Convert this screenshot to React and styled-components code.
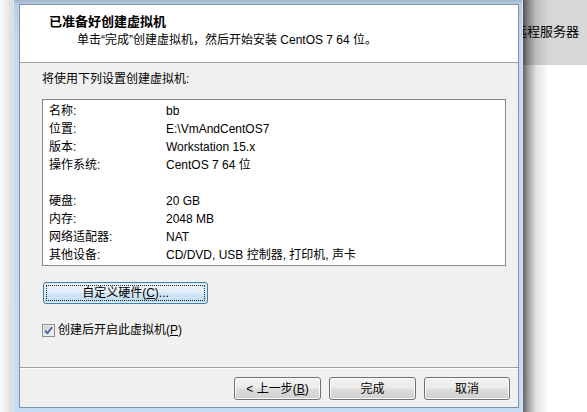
import React from "react";
import styled, { createGlobalStyle } from "styled-components";

const Global = createGlobalStyle`
  html, body { margin: 0; padding: 0; }
  body {
    width: 587px; height: 412px; overflow: hidden;
    font-family: "Liberation Sans", "Noto Sans CJK SC", sans-serif;
    font-size: 12px; color: #000;
  }
`;

const Desktop = styled.div`
  display: grid;
  grid-template-columns: 13px 510px 1fr;
  width: 587px;
  height: 412px;
  background: #ffffff;
`;

const LeftShade = styled.div`
  background: linear-gradient(to right, #fbfbfb 0px, #f0f0f0 5px, #e2e2e2 10px, #d4d8dd 13px);
`;

const Frame = styled.div`
  display: flex;
  padding: 4px 4px 4px 6px;
  background: linear-gradient(to bottom, #9fb3c8 0px, #b7cde4 4px, #c3d9f1 40px, #c6dcf4 100%);
  box-shadow: inset 1px 0 0 #d9e8f8, inset -1px 0 0 #d9e8f8;
`;

const Content = styled.div`
  flex: 1;
  display: flex;
  flex-direction: column;
  border: 1px solid #7f93a9;
  background: #f0f0f0;
  min-width: 0;
`;

const Header = styled.div`
  height: 58px;
  flex: none;
  box-sizing: border-box;
  background: #ffffff;
  border-bottom: 1px solid #a0a0a0;
  padding: 8px 0 0 29px;
`;

const Title = styled.div`
  font-size: 13px;
  font-weight: bold;
  line-height: 18px;
`;

const Subtitle = styled.div`
  margin: 1px 0 0 28px;
  line-height: 16px;
`;

const Body = styled.div`
  flex: 1;
  display: flex;
  flex-direction: column;
  align-items: flex-start;
  padding: 8px 12px 0 22px;
`;

const Intro = styled.div`
  line-height: 16px;
  margin-bottom: 12px;
`;

const List = styled.div`
  align-self: stretch;
  background: #ffffff;
  border: 1px solid #828790;
  padding: 2px 0 1px 6px;
`;

const Row = styled.div`
  display: grid;
  grid-template-columns: 117px 1fr;
  height: 18px;
  line-height: 18px;
  white-space: nowrap;
`;

const PushButton = styled.button`
  position: relative;
  box-sizing: border-box;
  width: ${(p) => p.$w}px;
  height: ${(p) => p.$h}px;
  padding: 0;
  font: inherit;
  font-size: 12px;
  line-height: 16px;
  color: #000;
  border-radius: 3px;
  border: 1px solid ${(p) => (p.$focused ? "#3c7fb1" : "#707070")};
  background: ${(p) =>
    p.$focused
      ? "linear-gradient(#edf5fc 0%, #e2eef9 48%, #d2e6f7 52%, #bfdbf1 100%)"
      : "linear-gradient(#f2f2f2 0%, #ebebeb 48%, #dddddd 52%, #cfcfcf 100%)"};
  box-shadow: inset 0 0 0 1px ${(p) => (p.$focused ? "#dbeefb" : "#fcfcfc")};
  &::after {
    content: "";
    display: ${(p) => (p.$focused ? "block" : "none")};
    position: absolute;
    inset: 2px;
    border: 1px dotted #222;
    border-radius: 1px;
  }
`;

const CustomButton = styled(PushButton)`
  margin: 16px 0 0 1px;
`;

const CheckRow = styled.label`
  display: flex;
  align-items: center;
  gap: 3px;
  margin-top: 19px;
  height: 14px;
  line-height: 14px;
`;

const Footer = styled.div`
  flex: none;
  height: 40px;
  display: flex;
  justify-content: flex-end;
  align-items: flex-start;
  gap: 8px;
  padding: 9px 8px 0 0;
  box-sizing: border-box;
  border-top: 1px solid #a0a0a0;
  box-shadow: inset 0 1px 0 #ffffff;
`;

const RightArea = styled.div`
  position: relative;
  overflow: hidden;
  display: flex;
  flex-direction: column;
  background: #ffffff;
  &::after {
    content: "";
    position: absolute;
    left: 0; top: 0; bottom: 0;
    width: 26px;
    background: linear-gradient(to right, rgba(0,0,0,0.62) 0px, rgba(0,0,0,0.38) 5px, rgba(0,0,0,0.12) 13px, rgba(0,0,0,0) 26px);
  }
`;

const TopStrip = styled.div`
  height: 65px;
  background: #d7d7d7;
  padding-top: 22px;
  box-sizing: border-box;
`;

const StripText = styled.span`
  display: block;
  margin-left: -9px;
  white-space: nowrap;
  font-family: "Noto Sans CJK SC", sans-serif;
  font-size: 13px;
  line-height: 18px;
`;

function CheckBox() {
  return (
    <svg width="13" height="13" viewBox="0 0 13 13">
      <defs>
        <linearGradient id="cb" x1="0" y1="0" x2="1" y2="1">
          <stop offset="0" stopColor="#cbcfd5" />
          <stop offset="1" stopColor="#f6f6f6" />
        </linearGradient>
      </defs>
      <rect x="0.5" y="0.5" width="12" height="12" fill="#f4f4f4" stroke="#8e8f8f" />
      <rect x="2" y="2" width="9" height="9" fill="url(#cb)" stroke="#d0d3d8" strokeWidth="0.5" />
      <path d="M3.2 6.6 L5.4 9.2 L10 3.2" fill="none" stroke="#4a5f97" strokeWidth="1.8" strokeLinejoin="round" />
    </svg>
  );
}

const rows = [
  ["名称:", "bb"],
  ["位置:", "E:\\VmAndCentOS7"],
  ["版本:", "Workstation 15.x"],
  ["操作系统:", "CentOS 7 64 位"],
  ["", ""],
  ["硬盘:", "20 GB"],
  ["内存:", "2048 MB"],
  ["网络适配器:", "NAT"],
  ["其他设备:", "CD/DVD, USB 控制器, 打印机, 声卡"],
];

export default function App() {
  return (
    <>
      <Global />
      <Desktop>
        <LeftShade />
        <Frame>
          <Content>
            <Header>
              <Title>已准备好创建虚拟机</Title>
              <Subtitle>单击“完成”创建虚拟机，然后开始安装 CentOS 7 64 位。</Subtitle>
            </Header>
            <Body>
              <Intro>将使用下列设置创建虚拟机:</Intro>
              <List>
                {rows.map(([k, v], i) => (
                  <Row key={i}>
                    <span>{k}</span>
                    <span>{v}</span>
                  </Row>
                ))}
              </List>
              <CustomButton $w={165} $h={22} $focused>
                自定义硬件(<u>C</u>)...
              </CustomButton>
              <CheckRow>
                <CheckBox />
                <span>创建后开启此虚拟机(<u>P</u>)</span>
              </CheckRow>
            </Body>
            <Footer>
              <PushButton $w={87} $h={23}>&lt; 上一步(<u>B</u>)</PushButton>
              <PushButton $w={87} $h={23}>完成</PushButton>
              <PushButton $w={86} $h={23}>取消</PushButton>
            </Footer>
          </Content>
        </Frame>
        <RightArea>
          <TopStrip>
            <StripText>远程服务器</StripText>
          </TopStrip>
        </RightArea>
      </Desktop>
    </>
  );
}
